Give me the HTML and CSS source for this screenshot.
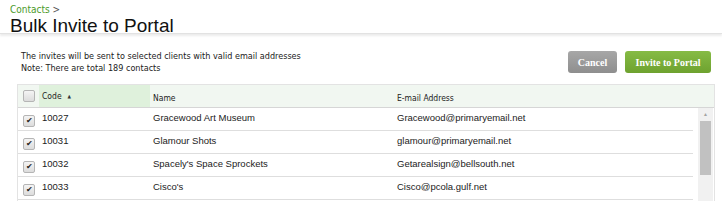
FILE: index.html
```html
<!DOCTYPE html>
<html lang="en">
<head>
    <meta charset="UTF-8">
    <title>Bulk Invite to Portal</title>
    <link rel="stylesheet" href="styles.css">
</head>
<body>
    <div class="page-head">
        <div class="crumb"><a href="#">Contacts</a> &gt;</div>
        <h1>Bulk Invite to Portal</h1>
    </div>

    <div class="toolbar">
        <div class="notes">
            <p>The invites will be sent to selected clients with valid email addresses</p>
            <p>Note: There are total 189 contacts</p>
        </div>
        <div class="actions">
            <button class="btn btn-cancel">Cancel</button>
            <button class="btn btn-invite">Invite to Portal</button>
        </div>
    </div>

    <div class="grid">
        <div class="grid-head">
            <div class="cell check"><span class="box"></span></div>
            <div class="cell code sorted">Code <span class="arrow">&#9650;</span></div>
            <div class="cell name">Name</div>
            <div class="cell email">E-mail Address</div>
        </div>
        <div class="grid-body">
            <div class="rows">
                <div class="row">
                    <div class="cell check"><span class="box on">&#10004;</span></div>
                    <div class="cell code">10027</div>
                    <div class="cell name">Gracewood Art Museum</div>
                    <div class="cell email">Gracewood@primaryemail.net</div>
                </div>
                <div class="row">
                    <div class="cell check"><span class="box on">&#10004;</span></div>
                    <div class="cell code">10031</div>
                    <div class="cell name">Glamour Shots</div>
                    <div class="cell email">glamour@primaryemail.net</div>
                </div>
                <div class="row">
                    <div class="cell check"><span class="box on">&#10004;</span></div>
                    <div class="cell code">10032</div>
                    <div class="cell name">Spacely's Space Sprockets</div>
                    <div class="cell email">Getarealsign@bellsouth.net</div>
                </div>
                <div class="row">
                    <div class="cell check"><span class="box on">&#10004;</span></div>
                    <div class="cell code">10033</div>
                    <div class="cell name">Cisco's</div>
                    <div class="cell email">Cisco@pcola.gulf.net</div>
                </div>
            </div>
            <div class="scrollbar">
                <div class="scroll-up">&#9650;</div>
                <div class="thumb"></div>
            </div>
        </div>
    </div>
</body>
</html>
```

FILE: styles.css
```css
html{
    font-family: "Liberation Sans", Arial, sans-serif;
}

body{
    margin: 0;
    color: #222;
    background: #fff;
    overflow: hidden;
}

.page-head{
    padding: 4px 10px 0 10px;
    height: 29px;
    border-bottom: 1px solid #e2e2e2;
    box-shadow: 0 2px 2px #ececec;
}

.crumb{
    font-family: "DejaVu Sans Condensed", "DejaVu Sans", sans-serif;
    font-size: 10px;
    color: #555;
    line-height: 12px;
}

.crumb a{
    color: #4c9a2a;
    text-decoration: none;
}

h1{
    margin: 0;
    font-size: 19px;
    font-weight: normal;
    line-height: 19px;
    color: #111;
}

.toolbar{
    display: flex;
    justify-content: space-between;
    align-items: flex-start;
    padding: 16px 11px 0 21px;
    height: 34px;
}

.notes p{
    margin: 0;
    font-family: "DejaVu Sans Condensed", "DejaVu Sans", sans-serif;
    font-size: 9px;
    line-height: 12px;
    color: #222;
}

.actions{
    display: flex;
    gap: 8px;
    padding-top: 1px;
}

.btn{
    height: 22px;
    border: none;
    border-radius: 3px;
    color: #fff;
    font-family: "Liberation Serif", serif;
    font-weight: bold;
    font-size: 10px;
    padding: 0;
    white-space: nowrap;
}

.btn-cancel{
    width: 49px;
    background: linear-gradient(#a7a7a7, #8e8e8e);
}

.btn-invite{
    width: 86px;
    background: linear-gradient(#86bb45, #6ea22f);
}

.grid{
    margin: 0 7px 0 17px;
    border: 1px solid #e3e3e3;
    border-bottom: none;
    font-size: 9.5px;
    color: #222;
}

.grid-head{
    display: flex;
    height: 22px;
    background: #f1f7f1;
    border-bottom: 1px solid #d6d6d6;
}

.cell{
    display: flex;
    align-items: center;
    padding-left: 3px;
    white-space: nowrap;
}

.grid-head .cell{
    font-family: "DejaVu Sans Condensed", "DejaVu Sans", sans-serif;
    font-size: 8.5px;
}

.grid-head .cell.name,
.grid-head .cell.email{
    padding-top: 4px;
}

.check{
    width: 16px;
    padding-left: 5px;
}

.code{
    width: 108px;
}

.sorted{
    background: #dff1dc;
}

.arrow{
    font-size: 5px;
    margin-left: 6px;
    color: #333;
}

.name{
    width: 241px;
}

.email{
    flex: 1;
}

.box{
    display: inline-block;
    width: 10px;
    height: 10px;
    border: 1px solid #b5b5b5;
    border-radius: 2px;
    background: linear-gradient(#f4f4f4, #dcdcdc);
    font-size: 8px;
    line-height: 10px;
    text-align: center;
    color: #222;
}

.grid-body{
    display: flex;
    height: 100px;
}

.rows{
    flex: 1;
}

.row{
    display: flex;
    height: 22px;
    border-bottom: 1px solid #dedede;
    margin-right: 5px;
}

.row .cell{
    padding-bottom: 3px;
}

.row .check{
    padding-top: 3px;
    padding-bottom: 0;
}

.scrollbar{
    width: 15px;
    margin-right: 1px;
    background: #f1f1f1;
    display: flex;
    flex-direction: column;
    align-items: center;
}

.scroll-up{
    height: 13px;
    font-size: 5px;
    line-height: 13px;
    color: #a3a3a3;
}

.thumb{
    width: 11px;
    height: 54px;
    background: #c1c1c1;
}
```
